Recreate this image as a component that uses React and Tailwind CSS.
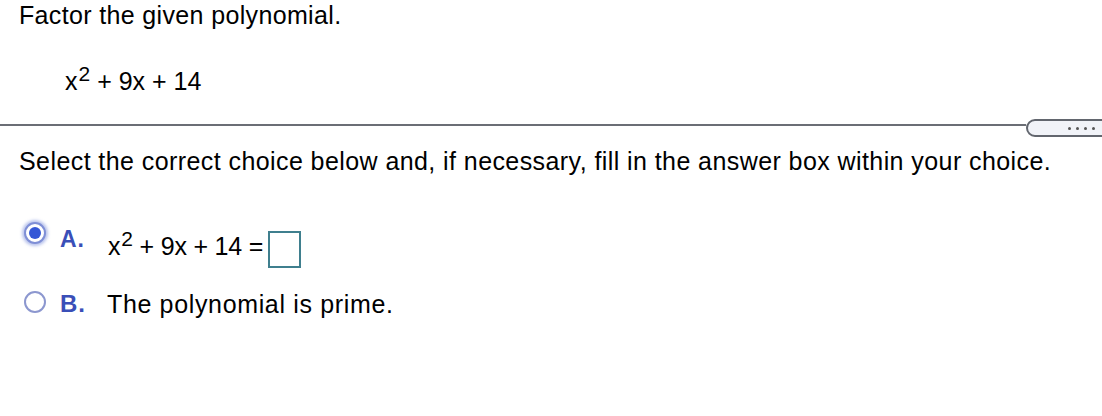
import React from 'react';

const Radio = ({ checked }) => (
    <span
        className={
            'flex items-center justify-center w-[22px] h-[22px] rounded-full border-2 bg-white ' +
            (checked ? 'border-[#7f8fd6] shadow-[0_0_3px_2px_rgba(120,140,220,0.5)]' : 'border-[#8c97cf]')
        }
    >
        {checked && <span className="w-[12px] h-[12px] rounded-full bg-[#3557d6]" />}
    </span>
);

const Poly = () => (
    <span>
        x<span className="relative -top-[9px] ml-[1px] text-[21px]">2</span> + 9x + 14
    </span>
);

export default function App() {
    return (
        <div className="w-[1102px] h-[416px] bg-white text-black font-['Liberation_Sans',Arial,sans-serif] overflow-hidden">
            <div className="pl-[19px] pt-[3px] text-[25px] leading-none tracking-[0.35px]">Factor the given polynomial.</div>

            <div className="pl-[65px] mt-[41px] text-[25px] leading-none">
                <Poly />
            </div>

            {/* divider with the "more" pill */}
            <div className="flex items-start mt-[25px] h-[18px]">
                <div className="flex-1 mt-[5px] h-[2px] bg-[#6b6e75]" />
                <div className="w-[80px] h-[18px] -mr-[4px] flex items-center justify-end gap-[5px] pr-[9px] rounded-l-[9px] border-2 border-[#62666e] bg-[#f1f3f8]">
                    <span className="w-[3px] h-[3px] rounded-full bg-[#555]" />
                    <span className="w-[3px] h-[3px] rounded-full bg-[#555]" />
                    <span className="w-[3px] h-[3px] rounded-full bg-[#555]" />
                    <span className="w-[3px] h-[3px] rounded-full bg-[#555]" />
                </div>
            </div>

            <div className="pl-[19px] mt-[12px] text-[25px] leading-none tracking-[0.42px]">
                Select the correct choice below and, if necessary, fill in the answer box within your choice.
            </div>

            <div className="flex flex-col gap-[47px] pl-[24px] mt-[48px]">
                <div className="flex items-start h-[22px]">
                    <Radio checked />
                    <span className="ml-[14px] w-[48px] mt-[6px] text-[23px] leading-none font-bold text-[#3a4fb8] tracking-[1px]">A.</span>
                    <span className="mt-[12px] text-[25px] leading-none tracking-[-0.2px]">
                        <Poly /> =
                    </span>
                    <span className="ml-[5px] mt-[9px] w-[33px] h-[37px] border-2 border-[#3f7f8e]" />
                </div>
                <div className="flex items-start h-[22px]">
                    <Radio />
                    <span className="ml-[14px] w-[47px] mt-[1px] text-[24px] leading-none font-bold text-[#3a4fb8] tracking-[1px]">B.</span>
                    <span className="mt-[1px] text-[25px] leading-none tracking-[0.65px]">The polynomial is prime.</span>
                </div>
            </div>
        </div>
    );
}
